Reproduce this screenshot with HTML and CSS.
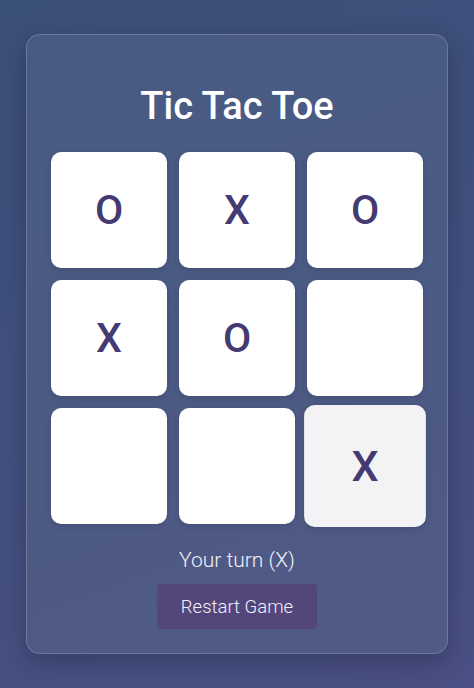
FILE: index.html
```html
<!DOCTYPE html>
<html lang="en">
<head>
  <meta charset="UTF-8">
  <meta name="viewport" content="width=device-width, initial-scale=1.0">
  <title>Tic Tac Toe</title>
  <link rel="stylesheet" href="styles.css">
</head>
<body>
  <div class="game">
    <h1>Tic Tac Toe</h1>

    <!-- Tabuleiro -->
    <div class="board">
      <div class="cell">O</div>
      <div class="cell">X</div>
      <div class="cell">O</div>
      <div class="cell">X</div>
      <div class="cell">O</div>
      <div class="cell"></div>
      <div class="cell"></div>
      <div class="cell"></div>
      <div class="cell hover">X</div>
    </div>

    <p class="status">Your turn (X)</p>
    <button class="restart-btn">Restart Game</button>
  </div>
</body>
</html>
```

FILE: styles.css
```css
/* Base */
body {
  font-family: Roboto, 'Liberation Sans', sans-serif;
  background: linear-gradient(160deg, #3b5078 0%, #435080 60%, #4a5083 100%);
  margin: 0;
  min-height: 100vh;
  display: flex;
  align-items: center;
  justify-content: center;
}

/* Cartão do jogo */
.game {
  width: 372px;
  padding: 0 24px 24px;
  background: linear-gradient(160deg, #485b83 0%, #4c5a84 60%, #515a86 100%);
  border: 1px solid rgba(255, 255, 255, 0.18);
  border-radius: 14px;
  box-shadow: 0 8px 24px rgba(20, 25, 50, 0.35);
  display: flex;
  flex-direction: column;
  align-items: center;
}

.game h1 {
  margin: 49px 0 24px;
  font-size: 38px;
  font-weight: 500;
  color: #ffffff;
}

/* Tabuleiro */
.board {
  width: 100%;
  display: grid;
  grid-template-columns: repeat(3, 1fr);
  grid-auto-rows: 116px;
  gap: 12px;
}

.cell {
  background-color: #ffffff;
  border-radius: 10px;
  box-shadow: 0 2px 6px rgba(0, 0, 0, 0.12);
  display: flex;
  align-items: center;
  justify-content: center;
  font-size: 41px;
  font-weight: 500;
  color: #453b72;
}

.cell.hover {
  background-color: #f3f3f5;
  transform: scale(1.05);
}

.status {
  margin: 24px 0 12px;
  font-size: 21px;
  font-weight: 300;
  color: #f2f0fa;
}

.restart-btn {
  font-family: inherit;
  font-size: 18.5px;
  font-weight: 300;
  color: #f2f0fa;
  background-color: #53467a;
  border: none;
  border-radius: 4px;
  width: 160px;
  height: 45px;
  cursor: pointer;
}
```
